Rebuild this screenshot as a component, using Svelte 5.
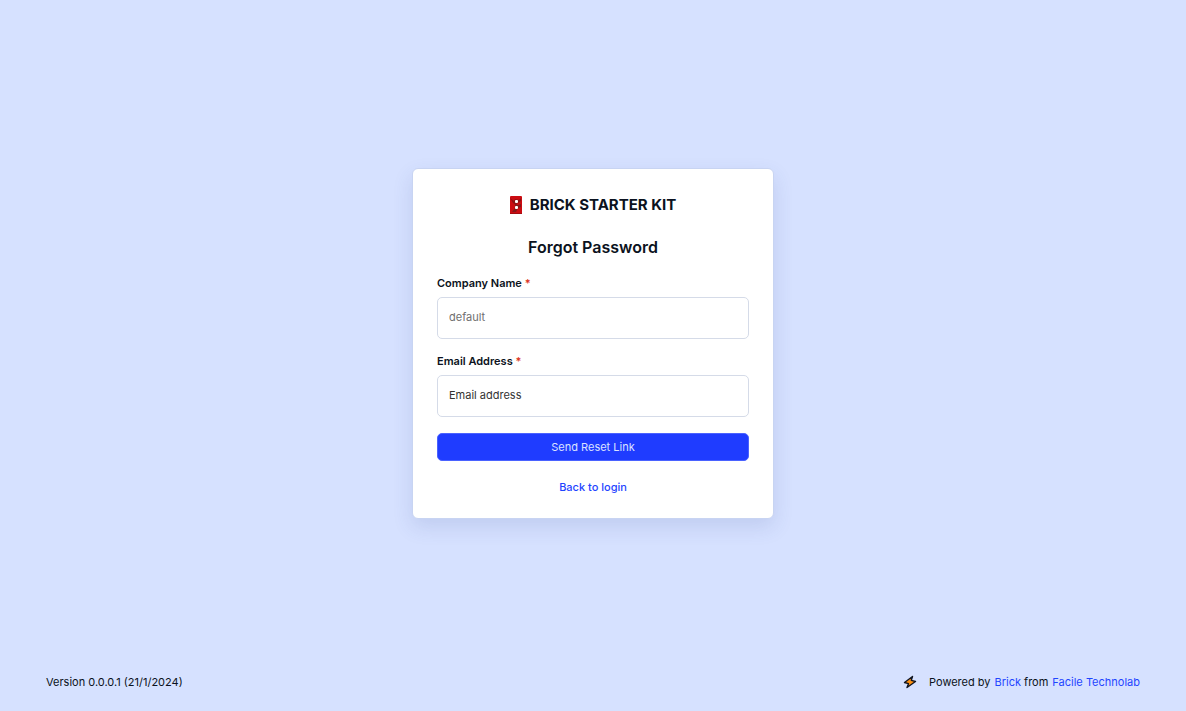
<script lang="ts">
  let company = $state('');
  let email = $state('');

  const version = '0.0.0.1';
  const released = '21/1/2024';

  const onSubmit = (e: SubmitEvent) => {
    e.preventDefault();
  };
</script>

<div class="page">
  <main>
    <form class="card" onsubmit={onSubmit}>
      <div class="brand">
        <svg class="brick" viewBox="0 0 12 18" aria-hidden="true">
          <rect width="12" height="18" rx="1" fill="#cb0c12" />
          <path d="M0 2l4 3 1-2 4 1 2-2v3L8 7 6 9 3 7z" fill="#8c1214" />
          <path d="M5 8l3 1 3-1v3l-3 1-2 4H2l3-4z" fill="#84181a" />
          <path d="M0 17h12v1H0z" fill="#a30c10" />
          <rect x="5" y="4" width="3" height="3" rx="1" fill="#fff" />
          <rect x="5" y="10" width="3" height="3" rx="1" fill="#fff" />
        </svg>
        <span>BRICK STARTER KIT</span>
      </div>

      <h1>Forgot Password</h1>

      <div class="field">
        <label for="company">Company Name <span class="required">*</span></label>
        <input id="company" type="text" placeholder="default" bind:value={company} />
      </div>

      <div class="field">
        <label for="email">Email Address <span class="required">*</span></label>
        <input id="email" class="dark" type="email" placeholder="Email address" bind:value={email} />
      </div>

      <button type="submit">Send Reset Link</button>
      <a class="back" href="#login">Back to login</a>
    </form>
  </main>

  <footer>
    <div>Version {version} ({released})</div>
    <div class="powered">
      <svg class="bolt" viewBox="0 0 14 14" aria-hidden="true">
        <path d="M9.5 1.5L1.5 7.5l4 1.2L4 12.5l8.5-6-4.2-1.2z" fill="#ff9010" stroke="#111622" stroke-width="1.4" stroke-linejoin="round" />
      </svg>
      <span>Powered by</span>
      <span><a href="#brick">Brick</a> from</span>
      <a href="#facile">Facile Technolab</a>
    </div>
  </footer>
</div>

<style>
  :global(body) {
    margin: 0;
  }

  .page {
    display: flex;
    flex-direction: column;
    min-height: 100vh;
    background: #d6e1ff;
    color: #0b1220;
    font-family: Inter, "Open Sans", sans-serif;
    font-size: 11px;
    line-height: 18px;
  }

  main {
    flex: 1;
    display: flex;
    align-items: center;
    justify-content: center;
    padding: 14px 16px 0;
  }

  .card {
    display: flex;
    flex-direction: column;
    box-sizing: border-box;
    width: 100%;
    max-width: 362px;
    padding: 25px 24px 22px;
    border: 1px solid #c8d4f2;
    border-radius: 6px;
    background: #fff;
    box-shadow: 0 8px 20px rgba(60, 80, 150, 0.14);
  }

  .brand {
    display: flex;
    align-items: center;
    justify-content: center;
    gap: 8px;
    font-size: 15px;
    font-weight: 700;
    line-height: 22px;
  }

  .brick {
    width: 12px;
    height: 18px;
  }

  h1 {
    margin: 20px 0 16px;
    font-size: 16px;
    font-weight: 600;
    line-height: 22px;
    text-align: center;
  }

  .field {
    display: flex;
    flex-direction: column;
    gap: 5px;
    margin-bottom: 13px;
  }

  label {
    font-weight: 600;
  }

  .required {
    color: #dc3522;
  }

  input {
    box-sizing: border-box;
    width: 100%;
    height: 42px;
    padding: 0 11px 2px;
    border: 1px solid #d5dbe8;
    border-radius: 5px;
    background: #fff;
    color: #0b1220;
    font: inherit;
  }

  input::placeholder {
    color: #6f6f6f;
    opacity: 1;
  }

  input.dark::placeholder {
    color: #333;
  }

  button {
    height: 28px;
    margin: 3px 0 17px;
    padding: 0;
    border: 1px solid #4a62ff;
    border-radius: 5px;
    background: #1f3cff;
    color: #dbe2ff;
    font: inherit;
    cursor: pointer;
  }

  a {
    color: #1f45ff;
    text-decoration: none;
  }

  .back {
    align-self: center;
    font-weight: 500;
  }

  footer {
    display: flex;
    align-items: center;
    justify-content: space-between;
    padding: 0 46px 20px;
  }

  .powered {
    display: flex;
    align-items: center;
    gap: 4px;
  }

  .bolt {
    width: 14px;
    height: 14px;
    margin-right: 8px;
  }
</style>
